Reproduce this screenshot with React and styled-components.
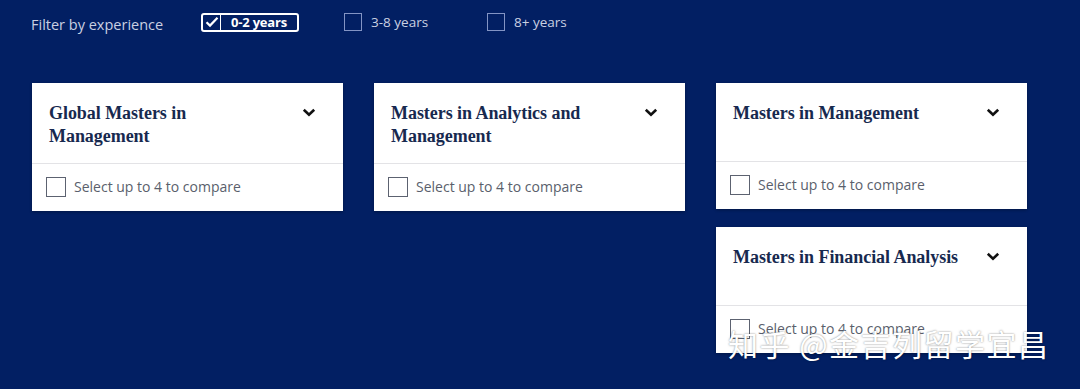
import React, { useState } from "react";
import styled, { createGlobalStyle } from "styled-components";

const GlobalStyle = createGlobalStyle`
  html, body {
    margin: 0;
    padding: 0;
    background: #021f63;
  }
`;

const programmes = [
  [{ id: 1, title: "Global Masters in Management" }],
  [{ id: 2, title: "Masters in Analytics and Management" }],
  [
    { id: 3, title: "Masters in Management" },
    { id: 4, title: "Masters in Financial Analysis" },
  ],
];

const filters = ["0-2 years", "3-8 years", "8+ years"];

const Chevron = () => (
  <svg width="14" height="9" viewBox="0 0 14 9">
    <path
      d="M1.8 1.8 L7 6.8 L12.2 1.8"
      fill="none"
      stroke="#111"
      strokeWidth="2.6"
    />
  </svg>
);

const Tick = () => (
  <svg width="14" height="12" viewBox="0 0 14 12">
    <path
      d="M1.5 6.2 L5 9.6 L12.5 1.8"
      fill="none"
      stroke="#fff"
      strokeWidth="2.2"
    />
  </svg>
);

const App = () => {
  const [experience, setExperience] = useState("0-2 years");
  const [selected, setSelected] = useState([]);

  const toggle = (id) =>
    setSelected((s) => (s.includes(id) ? s.filter((x) => x !== id) : [...s, id]));

  return (
    <Page>
      <GlobalStyle />
      <FilterBar>
        <FilterLabel>Filter by experience</FilterLabel>
        {filters.map((f) =>
          f === experience ? (
            <Option key={f}>
              <ActiveChip onClick={() => setExperience(f)}>
                <ActiveBox>
                  <Tick />
                </ActiveBox>
                <ActiveText>{f}</ActiveText>
              </ActiveChip>
            </Option>
          ) : (
            <Option key={f} onClick={() => setExperience(f)}>
              <FilterBox />
              <FilterText>{f}</FilterText>
            </Option>
          )
        )}
      </FilterBar>

      <Grid>
        {programmes.map((col, i) => (
          <Column key={i}>
            {col.map((p) => (
              <Card key={p.id}>
                <CardHeader>
                  <Title>{p.title}</Title>
                  <Toggle>
                    <Chevron />
                  </Toggle>
                </CardHeader>
                <CardFooter onClick={() => toggle(p.id)}>
                  <CompareBox checked={selected.includes(p.id)} />
                  <CompareText>Select up to 4 to compare</CompareText>
                </CardFooter>
              </Card>
            ))}
          </Column>
        ))}
      </Grid>

      <Watermark>知乎 @金吉列留学宜昌</Watermark>
    </Page>
  );
};

export default App;

const Page = styled.div`
  position: relative;
  width: 1080px;
  height: 389px;
  overflow: hidden;
  background: #021f63;
  box-sizing: border-box;
  padding: 13px 0 0 31px;
`;

const FilterBar = styled.div`
  display: flex;
  align-items: center;
  height: 18px;
`;

const FilterLabel = styled.span`
  width: 170px;
  padding-top: 5px;
  font-family: "Open Sans", sans-serif;
  font-size: 14.5px;
  color: #c9d0e2;
`;

const Option = styled.div`
  width: 143px;
  display: flex;
  align-items: center;
  gap: 9px;
  cursor: pointer;
`;

const FilterBox = styled.span`
  width: 18px;
  height: 18px;
  box-sizing: border-box;
  border: 1px solid #8394c4;
`;

const FilterText = styled.span`
  font-family: "Open Sans", sans-serif;
  font-size: 13.5px;
  color: #c9d0e2;
`;

const ActiveChip = styled.div`
  display: flex;
  align-items: stretch;
  width: 98px;
  height: 19px;
  box-sizing: border-box;
  border: 2px solid #ffffff;
  border-radius: 3px;
`;

const ActiveBox = styled.span`
  width: 17px;
  display: flex;
  align-items: center;
  justify-content: center;
  border-right: 1.5px solid #ffffff;
`;

const ActiveText = styled.span`
  flex: 1;
  display: flex;
  align-items: center;
  justify-content: center;
  font-family: "Open Sans", sans-serif;
  font-size: 13px;
  font-weight: 700;
  color: #ffffff;
  letter-spacing: -0.2px;
`;

const Grid = styled.div`
  display: grid;
  grid-template-columns: repeat(3, 311px);
  column-gap: 31px;
  margin-top: 52px;
  padding-left: 1px;
  align-items: start;
`;

const Column = styled.div`
  display: flex;
  flex-direction: column;
  gap: 18px;
`;

const Card = styled.div`
  background: #ffffff;
  box-shadow: 0 1px 3px rgba(0, 0, 0, 0.3);
`;

const CardHeader = styled.div`
  display: flex;
  justify-content: space-between;
  align-items: flex-start;
  box-sizing: border-box;
  min-height: 79px;
  padding: 19px 26px 15px 17px;
  border-bottom: 1px solid #e3e3e6;
`;

const Title = styled.h3`
  margin: 0;
  max-width: 230px;
  font-family: "Liberation Serif", "Times New Roman", serif;
  font-size: 18px;
  font-weight: 700;
  line-height: 23px;
  color: #17294f;
  letter-spacing: -0.05px;
`;

const Toggle = styled.span`
  display: flex;
  padding-top: 6px;
  margin-right: 1px;
`;

const CardFooter = styled.label`
  display: flex;
  align-items: center;
  gap: 8px;
  box-sizing: border-box;
  height: 47px;
  padding: 0 14px 3px;
  cursor: pointer;
`;

const CompareBox = styled.span`
  width: 20px;
  height: 20px;
  margin-top: 2px;
  box-sizing: border-box;
  border: 1px solid #5c6270;
  background: ${(props) => (props.checked ? "#17294f" : "#ffffff")};
`;

const CompareText = styled.span`
  font-family: "Open Sans", sans-serif;
  font-size: 14px;
  color: #5a5f6c;
`;

const Watermark = styled.div`
  position: absolute;
  left: 728px;
  top: 321px;
  font-family: "Noto Sans CJK SC", sans-serif;
  font-size: 30px;
  letter-spacing: 1.5px;
  color: #ffffff;
  text-shadow: 0 0 2px rgba(0, 0, 0, 0.5);
`;
